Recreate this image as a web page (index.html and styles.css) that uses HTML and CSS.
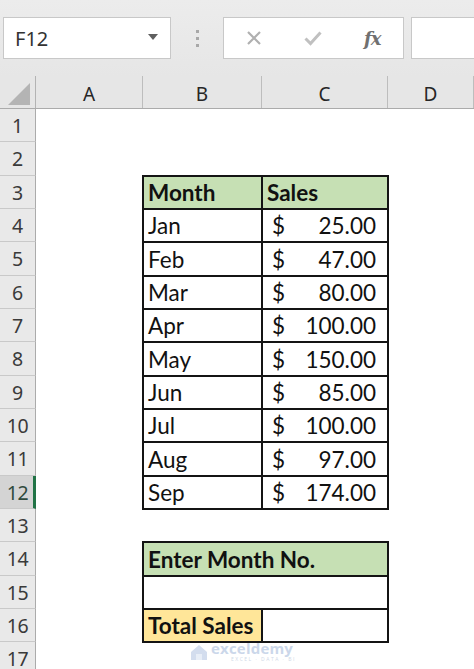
FILE: index.html
```html
<!DOCTYPE html>
<html>
<head>
<meta charset="utf-8">
<link rel="stylesheet" href="styles.css">
</head>
<body>
<div class="app">
  <div class="toolbar">
    <div class="namebox">
      <span class="name">F12</span>
      <svg class="caret" width="10" height="6" viewBox="0 0 10 6"><path d="M0 0 L10 0 L5 6 Z" fill="#5f5f5f"/></svg>
    </div>
    <div class="grip"><i></i><i></i><i></i></div>
    <div class="fxbox">
      <svg class="ico" width="16" height="16" viewBox="0 0 16 16"><path d="M2 2 L14 14 M14 2 L2 14" stroke="#b0b0b0" stroke-width="2.2" fill="none"/></svg>
      <svg class="ico" width="18" height="16" viewBox="0 0 18 16"><path d="M1.5 8.5 L6.5 13.5 L16.5 2.5" stroke="#c0c0c0" stroke-width="3" fill="none"/></svg>
      <span class="fx">fx</span>
    </div>
    <div class="formula"></div>
  </div>

  <div class="sheet">
    <div class="row head">
      <div class="corner"><svg width="22" height="22" viewBox="0 0 22 22"><path d="M22 0 L22 22 L0 22 Z" fill="#b4b4b4"/></svg></div>
      <div class="ch">A</div><div class="ch">B</div><div class="ch">C</div><div class="ch">D</div>
    </div>
    <div class="row"><div class="rh">1</div><div></div><div></div><div></div><div></div></div>
    <div class="row"><div class="rh">2</div><div></div><div></div><div></div><div></div></div>
    <div class="row"><div class="rh">3</div><div></div><div class="t th">Month</div><div class="t th">Sales</div><div></div></div>
    <div class="row"><div class="rh">4</div><div></div><div class="t">Jan</div><div class="t money"><span>$</span><span>25.00</span></div><div></div></div>
    <div class="row"><div class="rh">5</div><div></div><div class="t">Feb</div><div class="t money"><span>$</span><span>47.00</span></div><div></div></div>
    <div class="row"><div class="rh">6</div><div></div><div class="t">Mar</div><div class="t money"><span>$</span><span>80.00</span></div><div></div></div>
    <div class="row"><div class="rh">7</div><div></div><div class="t">Apr</div><div class="t money"><span>$</span><span>100.00</span></div><div></div></div>
    <div class="row"><div class="rh">8</div><div></div><div class="t">May</div><div class="t money"><span>$</span><span>150.00</span></div><div></div></div>
    <div class="row"><div class="rh">9</div><div></div><div class="t">Jun</div><div class="t money"><span>$</span><span>85.00</span></div><div></div></div>
    <div class="row"><div class="rh">10</div><div></div><div class="t">Jul</div><div class="t money"><span>$</span><span>100.00</span></div><div></div></div>
    <div class="row"><div class="rh">11</div><div></div><div class="t">Aug</div><div class="t money"><span>$</span><span>97.00</span></div><div></div></div>
    <div class="row"><div class="rh sel">12</div><div></div><div class="t">Sep</div><div class="t money"><span>$</span><span>174.00</span></div><div></div></div>
    <div class="row"><div class="rh">13</div><div></div><div></div><div></div><div></div></div>
    <div class="row"><div class="rh">14</div><div></div><div class="t th span2">Enter Month No.</div><div></div></div>
    <div class="row"><div class="rh">15</div><div></div><div class="t span2"></div><div></div></div>
    <div class="row"><div class="rh">16</div><div></div><div class="t tot">Total Sales</div><div class="t"></div><div></div></div>
    <div class="row"><div class="rh">17</div><div></div><div></div><div></div><div></div></div>
  </div>

  <div class="watermark">
    <svg width="18" height="18" viewBox="0 0 18 18"><path d="M1 9 L9 2 L17 9 L17 17 L1 17 Z" fill="#d3ddee"/><path d="M6 17 L6 11 L12 11 L12 17" fill="#e8eef7"/></svg>
    <div class="wm-text">
      <span class="wm-big">exceldemy</span>
      <span class="wm-small">EXCEL · DATA · BI</span>
    </div>
  </div>
</div>
</body>
</html>
```

FILE: styles.css
```css
* { box-sizing: border-box; }
html, body { margin: 0; padding: 0; }
body {
  width: 474px;
  height: 669px;
  overflow: hidden;
  background: #ffffff;
  font-family: "Noto Sans", sans-serif;
}
.app {
  position: relative;
  width: 474px;
  height: 669px;
  overflow: hidden;
}

/* toolbar */
.toolbar {
  height: 76px;
  background: linear-gradient(#ececec, #e6e6e6);
  display: flex;
  align-items: flex-start;
  padding: 17px 0 0 3px;
}
.namebox {
  width: 168px;
  height: 42px;
  background: #fff;
  border: 1px solid #c8c8c8;
  display: flex;
  align-items: center;
  justify-content: space-between;
  padding: 0 12px 0 11px;
}
.name {
  font-family: "Noto Sans", sans-serif;
  font-size: 20px;
  color: #333;
}
.caret { margin-top: -2px; }
.grip {
  width: 52px;
  height: 42px;
  display: flex;
  flex-direction: column;
  align-items: center;
  justify-content: center;
  gap: 4px;
}
.grip i {
  width: 3px;
  height: 3px;
  background: #a8a8a8;
  display: block;
}
.fxbox {
  width: 181px;
  height: 42px;
  background: #fff;
  border: 1px solid #c8c8c8;
  display: flex;
  align-items: center;
  padding: 0 16px 0 22px;
}
.fxbox .ico:first-child { margin-right: 42px; }
.fxbox .ico:nth-child(2) { margin-right: 42px; }
.fx {
  font-family: "DejaVu Serif", "Liberation Serif", serif;
  font-style: italic;
  font-weight: bold;
  font-size: 18px;
  color: #707070;
  letter-spacing: -1px;
}
.formula {
  flex: 1;
  height: 42px;
  margin-left: 7px;
  background: #fff;
  border: 1px solid #c8c8c8;
  border-right: none;
}

/* sheet */
.row {
  display: grid;
  grid-template-columns: 36px 107px 119px 126px 1fr;
  height: 33.333px;
}
.row.head {
  height: 33px;
  background: #e6e6e6;
  border-bottom: 1px solid #ababab;
}
.corner {
  border-right: 1px solid #b3b3b3;
  display: flex;
  align-items: flex-end;
  justify-content: flex-end;
  padding: 0 5px 3px 0;
}
.ch {
  border-right: 1px solid #bdbdbd;
  display: flex;
  align-items: center;
  justify-content: center;
  font-size: 19px;
  color: #262626;
  padding-top: 3px;
}
.rh {
  background: #e9e9e9;
  border-right: 1px solid #ababab;
  border-bottom: 1px solid #c9c9c9;
  display: flex;
  align-items: center;
  justify-content: center;
  font-size: 19.5px;
  color: #3a3a3a;
  padding-top: 1px;
  letter-spacing: -0.3px;
}
.rh.sel {
  background: #d4d4d4;
  border-right: 3px solid #217346;
  color: #2f4a3c;
  padding-left: 2px;
}

/* table cells */
.t {
  outline: 2px solid #141414;
  outline-offset: -1px;
  font-family: Lato, "Noto Sans", sans-serif;
  font-size: 22.5px;
  color: #111;
  display: flex;
  align-items: flex-end;
  padding: 0 4px 3px 5px;
  white-space: nowrap;
}
.th {
  background: #c6e0b4;
  font-weight: bold;
}
.tot {
  background: #ffe699;
  font-weight: bold;
}
.span2 { grid-column: span 2; }
.money {
  justify-content: space-between;
  padding: 0 12px 3px 10px;
}

/* watermark overlay */
.watermark {
  position: absolute;
  left: 190px;
  top: 641px;
  display: flex;
  align-items: center;
  gap: 3px;
}
.wm-text {
  display: flex;
  flex-direction: column;
  gap: 1px;
}
.wm-big {
  font-family: "Open Sans", sans-serif;
  font-weight: bold;
  font-size: 15px;
  line-height: 14px;
  color: #cbd7ea;
  letter-spacing: 0.2px;
}
.wm-small {
  font-family: "Open Sans", sans-serif;
  font-size: 5px;
  line-height: 6px;
  color: #d0d9e7;
  letter-spacing: 1.5px;
  padding-left: 20px;
}
```
